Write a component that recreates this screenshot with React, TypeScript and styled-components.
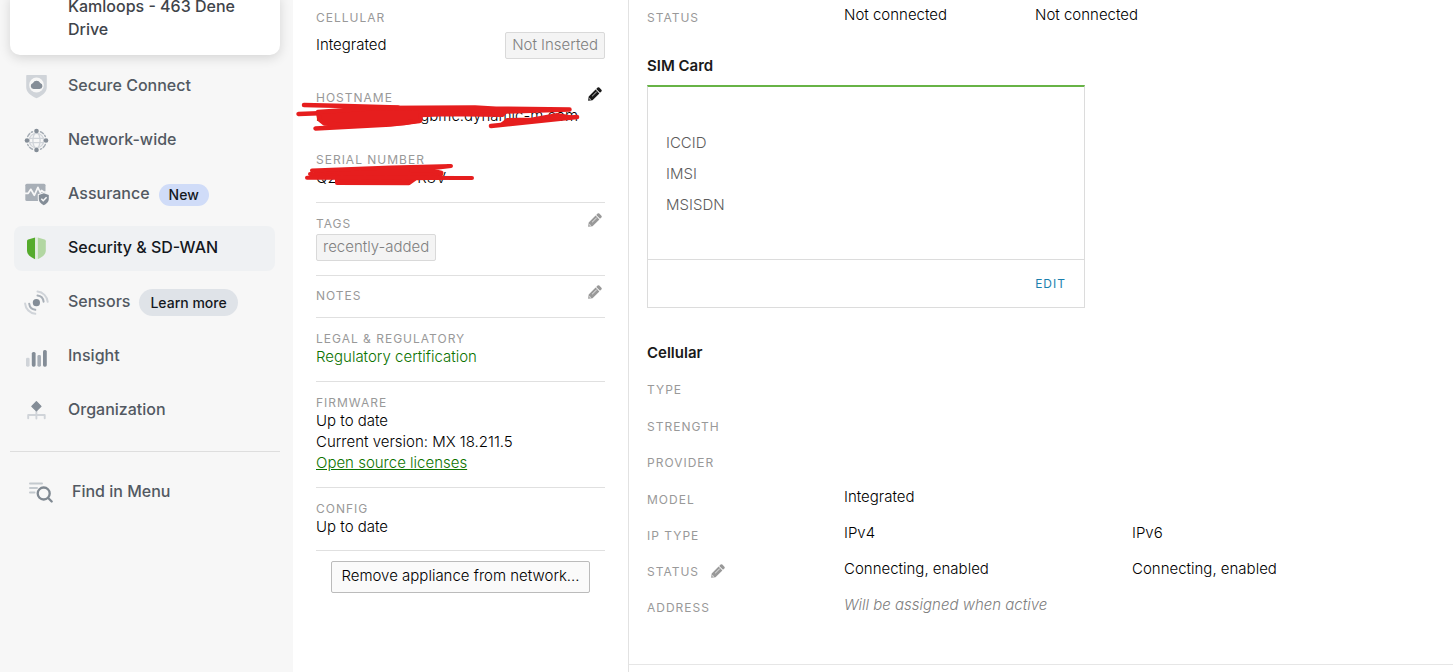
import React from "react";
import styled, { createGlobalStyle } from "styled-components";

const GlobalStyle = createGlobalStyle`
  *, *::before, *::after { box-sizing: border-box; }
  html { background: #fff; }
  body {
    margin: 0;
    font-family: Inter, "Liberation Sans", sans-serif;
    font-size: 15px;
    font-weight: 300;
    line-height: 21px;
    color: #000;
    overflow: hidden;
  }
`;

const Page = styled.div`
  display: grid;
  grid-template-columns: 293px 336px minmax(0, 1fr);
  min-height: 100vh;
`;

/* ---------- Sidebar ---------- */

const Sidebar = styled.nav`
  background: #f7f7f7;
  padding: 0 13px 0 10px;
`;

const NetworkCard = styled.div`
  background: #fff;
  border-radius: 0 0 10px 10px;
  box-shadow: 0 3px 12px rgba(0, 0, 0, 0.14);
  padding: 0 40px 14px 58px;
  font-size: 16px;
  font-weight: 500;
  line-height: 23px;
  color: #3f444a;

  span {
    display: block;
    margin-top: -5px;
  }
`;

const NavList = styled.ul`
  list-style: none;
  margin: 9px 0 0;
  padding: 0 5px 0 4px;
  display: flex;
  flex-direction: column;
  gap: 9px;
`;

const NavItem = styled.li<{ $active?: boolean }>`
  display: flex;
  align-items: center;
  gap: 9px;
  height: 45px;
  padding-left: 10px;
  border-radius: 8px;
  background: ${(p) => (p.$active ? "#eff1f3" : "transparent")};
`;

const NavLink = styled.a<{ $active?: boolean }>`
  display: flex;
  align-items: flex-start;
  gap: 18px;
  text-decoration: none;
  font-size: 16px;
  font-weight: 500;
  line-height: 22px;
  color: ${(p) => (p.$active ? "#14181d" : "#525962")};

  svg {
    flex: none;
    width: 26px;
    height: 26px;
  }
`;

const Pill = styled.span<{ $tone: "blue" | "grey" }>`
  padding: ${(p) => (p.$tone === "blue" ? "0 10px 1px" : "3px 11px")};
  border-radius: 14px;
  background: ${(p) => (p.$tone === "blue" ? "#d0dcf8" : "#dfe3e8")};
  color: #14181d;
  font-size: 14px;
  font-weight: 500;
  line-height: 21px;
`;

const SidebarRule = styled.hr`
  border: 0;
  border-top: 1px solid #dedede;
  margin: 18px 0 0;
`;

const FindButton = styled.button`
  display: flex;
  align-items: flex-start;
  gap: 18px;
  margin: 27px 0 0 18px;
  padding: 0;
  border: 0;
  background: none;
  font: 500 16px/24px Inter, "Liberation Sans", sans-serif;
  color: #525962;

  svg {
    width: 26px;
    height: 26px;
  }
`;

/* ---------- Details column ---------- */

const Details = styled.aside`
  border-right: 1px solid #e2e2e2;
  padding: 10px 23px 0;
`;

const Section = styled.section<{ $bottom?: number; $top?: number; $rule?: boolean }>`
  position: relative;
  padding: ${(p) => p.$top ?? 13}px 0 ${(p) => p.$bottom ?? 14}px;
  border-bottom: ${(p) => (p.$rule === false ? "0" : "1px solid #e0e0e0")};
`;

const Label = styled.h3`
  margin: 0 0 -1px;
  font-size: 12px;
  font-weight: 400;
  line-height: 16px;
  letter-spacing: 1px;
  text-transform: uppercase;
  color: #999;
`;

const LabelRow = styled.div`
  display: flex;
  justify-content: space-between;
  height: 15px;
  padding-right: 3px;
`;

const IconButton = styled.button<{ $dark?: boolean }>`
  display: block;
  height: 14px;
  margin-top: -3px;
  padding: 0;
  border: 0;
  background: none;
  color: ${(p) => (p.$dark ? "#1a1a1a" : "#999")};

  svg {
    display: block;
    width: 14px;
    height: 14px;
  }
`;

const Line = styled.div`
  line-height: 21px;
`;

const TextLink = styled.a<{ $underline?: boolean }>`
  color: #0c7300;
  text-decoration: ${(p) => (p.$underline ? "underline" : "none")};
`;

const CardSlot = styled.div`
  display: flex;
  justify-content: space-between;
  align-items: flex-start;
  margin-top: 7px;
`;

const CardType = styled.span`
  padding-top: 2px;
`;

const Tag = styled.span`
  display: inline-block;
  padding: 1px 6px 3px;
  border: 1px solid #d9d9d9;
  border-radius: 2px;
  background: #f4f4f4;
  color: #808080;
`;

const TagSlot = styled.div`
  display: flex;
  margin-top: 3px;
`;

const Masked = styled.div<{ $width: number }>`
  display: flex;
  justify-content: space-between;
  width: ${(p) => p.$width}px;
`;

const Marker = styled.svg`
  position: absolute;
  left: -23px;
  top: 0;
  width: 300px;
  height: 112px;
  pointer-events: none;
`;

const RemoveButton = styled.button`
  display: block;
  margin: 10px auto 0;
  padding: 3px 9px 6px;
  border: 1px solid #bbb;
  border-radius: 2px;
  background: #fafafa;
  font: 300 15px/21px Inter, "Liberation Sans", sans-serif;
  color: #000;
`;

/* ---------- Uplink column ---------- */

const Uplink = styled.main`
  min-width: 0;
`;

const UplinkBody = styled.div`
  padding: 4px 18px 34px;
  border-bottom: 1px solid #e6e6e6;
`;

const Heading = styled.h2`
  margin: 0;
  font-size: 15px;
  font-weight: 600;
  line-height: 21px;
  color: #1a1a1a;
`;

const DataTable = styled.table<{ $gap?: number }>`
  width: 100%;
  margin-top: ${(p) => p.$gap ?? 0}px;
  table-layout: fixed;
  border-collapse: collapse;

  th, td {
    padding: 0;
    text-align: left;
    vertical-align: top;
    font-weight: 300;
  }
`;

const Row = styled.tr<{ $height?: number }>`
  height: ${(p) => p.$height ?? 36}px;
`;

const RowHead = styled.div`
  display: flex;
  align-items: center;
  gap: 12px;
  padding-top: 6px;
  font-size: 12px;
  font-weight: 400;
  line-height: 16px;
  letter-spacing: 1px;
  text-transform: uppercase;
  color: #999;
`;

const Pending = styled.em`
  color: #808080;
`;

const SimCard = styled.section`
  max-width: 438px;
  margin: 9px 0 34px;
  border: 1px solid #dcdcdc;
  border-top: 2px solid #67b346;
`;

const SimFields = styled.ul`
  list-style: none;
  margin: 0;
  padding: 40px 18px 39px;
  color: #5c5c5c;

  li { line-height: 31px; }
`;

const SimFooter = styled.footer`
  display: flex;
  justify-content: flex-end;
  padding: 16px 18px 15px;
  border-top: 1px solid #dcdcdc;
`;

const EditButton = styled.button`
  padding: 0;
  border: 0;
  background: none;
  font: 400 12px/16px Inter, "Liberation Sans", sans-serif;
  letter-spacing: 1px;
  color: #1b7fae;
`;

/* ---------- Icons ---------- */

const DARK = "#848d97";
const MID = "#a8afb7";
const LIGHT = "#d0d4d9";
const BG = "#f7f7f7";

const ShieldCloudIcon = () => (
  <svg viewBox="0 0 26 26" aria-hidden="true">
    <path d="M3 1h19q.8 0 .8.8V13c0 5-4 8.600-10.300 11.200C6.200 21.600 2.200 18 2.200 13V1.800Q2.200 1 3 1z" fill={LIGHT} />
    <circle cx="12.500" cy="11" r="7.400" fill={BG} />
    <path d="M9.600 15a3 3 0 0 1-.6-5.900 3.900 3.900 0 0 1 7.200 0 3 3 0 0 1-.6 5.900z" fill={DARK} />
  </svg>
);

const GlobeIcon = () => (
  <svg viewBox="0 0 26 26" fill="none" aria-hidden="true">
    <circle cx="12.500" cy="12.500" r="7.200" stroke={LIGHT} strokeWidth="1.300" />
    <ellipse cx="12.500" cy="12.500" rx="3.600" ry="7.800" stroke={LIGHT} strokeWidth="1.300" />
    <path d="M5 10.300h15M5 14.700h15" stroke={LIGHT} strokeWidth="1.200" />
    <path d="M3.700 8.500a10 10 0 0 1 4.800-4.800M16.500 3.700a10 10 0 0 1 4.800 4.800M21.300 16.500a10 10 0 0 1-4.800 4.800M8.500 21.300a10 10 0 0 1-4.800-4.800" stroke={MID} strokeWidth="1.500" strokeLinecap="round" strokeDasharray="3.500 2" />
    <g fill={DARK}>
      <circle cx="12.500" cy="3" r="2.300" />
      <circle cx="12.500" cy="22" r="2.300" />
      <circle cx="3" cy="12.500" r="2.300" />
      <circle cx="22" cy="12.500" r="2.300" />
    </g>
  </svg>
);

const AssuranceIcon = () => (
  <svg viewBox="0 0 26 26" fill="none" aria-hidden="true">
    <rect x="1.300" y="1.700" width="20.200" height="17.200" rx="1.500" fill={MID} />
    <path d="M1 11.300h3.200l2.600-4 3.500 6 3.600-8 2.400 5.200 1.300-2 2 1.500h2.400" stroke={BG} strokeWidth="1.700" strokeLinejoin="round" />
    <path d="M19.800 10.300l6 2v4.800c0 3.300-2.500 5.600-6 7.200-3.500-1.600-6-3.900-6-7.200v-4.800z" fill={BG} />
    <path d="M19.800 11.300l5 1.700v4c0 2.800-2 4.800-5 6.200-3-1.400-5-3.400-5-6.200v-4z" fill={DARK} />
    <path d="M17.300 16.800l1.900 1.900 3.400-3.500" stroke={BG} strokeWidth="1.600" />
  </svg>
);

const SecurityIcon = () => (
  <svg viewBox="0 0 26 26" aria-hidden="true">
    <path d="M11.100 1.600v21.600C6 20.900 3 18.400 3 14.500V5.200Q3 4 4.200 3.600z" fill="#55ab2c" />
    <path d="M13.700 1.600v21.600c5.100-2.300 8.100-4.800 8.100-8.700V5.200q0-1.200-1.200-1.600z" fill="#b2d7a2" />
    <path d="M12.400 1.200v22.300" stroke="#e1ecdd" strokeWidth="1" />
  </svg>
);

const SensorsIcon = () => (
  <svg viewBox="0 0 26 26" fill="none" strokeWidth="2" strokeLinecap="round" aria-hidden="true">
    <circle cx="12.400" cy="12.700" r="3.600" fill={DARK} />
    <path d="M13.500 5.600a7 7 0 0 1 6.100 6.100M11.300 19.800a7 7 0 0 1-6.100-6.100" stroke={MID} />
    <path d="M13.500 1.600a11.200 11.200 0 0 1 10.200 10.200M11.300 23.800A11.200 11.200 0 0 1 1.100 13.600" stroke={LIGHT} />
  </svg>
);

const InsightIcon = () => (
  <svg viewBox="0 0 26 26" aria-hidden="true">
    <rect x="2" y="13.700" width="3.600" height="9" rx="1.400" fill={LIGHT} />
    <rect x="7.800" y="8" width="3.800" height="14.700" rx="1.600" fill={DARK} />
    <rect x="13.400" y="11" width="3.600" height="11.700" rx="1.400" fill={MID} />
    <rect x="19" y="6" width="3.800" height="16.700" rx="1.600" fill={DARK} />
  </svg>
);

const OrganizationIcon = () => (
  <svg viewBox="0 0 26 26" fill="none" aria-hidden="true">
    <path d="M12.400 13v7.500M4.200 20.200v-3.200h16.500v3.200" stroke={LIGHT} strokeWidth="1.900" strokeLinecap="round" strokeLinejoin="round" />
    <path d="M12.400 3.700l4.600 4.600-4.600 4.600L7.800 8.300z" fill={DARK} stroke={DARK} strokeWidth="1.200" strokeLinejoin="round" />
  </svg>
);

const FindIcon = () => (
  <svg viewBox="0 0 26 26" fill="none" strokeLinecap="round" aria-hidden="true">
    <path d="M2 4.400h12M2 9h7M2 13.500h4.500" stroke="#c3c9ce" strokeWidth="2" />
    <circle cx="15.700" cy="14.500" r="6" stroke="#7f8891" strokeWidth="2.300" />
    <path d="M20.200 19l3.500 3.500" stroke="#7f8891" strokeWidth="2.300" />
  </svg>
);

const PencilIcon = () => (
  <svg viewBox="0 0 14 14" aria-hidden="true">
    <path
      fill="currentColor"
      fillRule="evenodd"
      d="M.1 13.700l.6-4.200L7.600 2.600l3.800 3.800-6.900 6.900zM1.500 10.900l-.2 1.100.7.700 1.100-.2zM4 9.100l.3.300 4.500-4.500-.3-.3z"
    />
    <path fill="currentColor" d="M8.200 2L9.600.6q.9-.8 1.700 0l2.100 2.100q.8.900 0 1.700L12 5.800z" />
  </svg>
);

const NAV: { label: string; icon: React.FC; pill?: string; tone?: "blue" | "grey"; active?: boolean }[] = [
  { label: "Secure Connect", icon: ShieldCloudIcon },
  { label: "Network-wide", icon: GlobeIcon },
  { label: "Assurance", icon: AssuranceIcon, pill: "New", tone: "blue" },
  { label: "Security & SD-WAN", icon: SecurityIcon, active: true },
  { label: "Sensors", icon: SensorsIcon, pill: "Learn more", tone: "grey" },
  { label: "Insight", icon: InsightIcon },
  { label: "Organization", icon: OrganizationIcon },
];

const EditPencil = ({ label, dark }: { label: string; dark?: boolean }) => (
  <IconButton type="button" aria-label={label} $dark={dark}>
    <PencilIcon />
  </IconButton>
);

/* Hand-drawn marker strokes that hide the host name and the serial number. */
const Redaction = () => (
  <Marker viewBox="293 90 300 112" aria-hidden="true">
    <g fill="#e61e1e" stroke="#e61e1e" strokeLinecap="round" strokeLinejoin="round">
      <g strokeWidth="4.500">
        <path d="M304 105l42 1 52 1.500" />
        <path d="M298.500 114l20-.8" />
        <path d="M315.500 128.500l75-4 29-3.500" fill="none" />
        <path d="M318 112l58-4 99-.5 21 1.200 73.500.8-64 2-3 3.300-55-.7-27 .9 0 5-16 3-50 2.500-30-2-5-4z" />
        <path d="M491 126l86-9" fill="none" />
        <path d="M501 124l6-5 25-.5 25-4.500 17 2.700-35 3.800z" strokeWidth="2" />
      </g>
      <g strokeWidth="4">
        <path d="M451 166l-60 1.500-79 3 3 3.500h-5l27 2v7l72 .2 7-5 24-.5 1.500-5-10-2.200-20 .3z" />
        <path d="M307 177.700l165 .3" />
      </g>
    </g>
  </Marker>
);

export default function App() {
  return (
    <>
      <GlobalStyle />
      <Page>
        <Sidebar aria-label="Main">
          <NetworkCard>
            <span>Kamloops - 463 Dene Drive</span>
          </NetworkCard>
          <NavList>
            {NAV.map(({ label, icon: Icon, pill, tone, active }) => (
              <NavItem key={label} $active={active}>
                <NavLink href="#" $active={active} aria-current={active ? "page" : undefined}>
                  <Icon />
                  {label}
                </NavLink>
                {pill && <Pill $tone={tone ?? "grey"}>{pill}</Pill>}
              </NavItem>
            ))}
          </NavList>
          <SidebarRule />
          <FindButton type="button">
            <FindIcon />
            Find in Menu
          </FindButton>
        </Sidebar>

        <Details>
          <Section $top={0} $bottom={31} $rule={false}>
            <Label>Cellular</Label>
            <CardSlot>
              <CardType>Integrated</CardType>
              <Tag>Not Inserted</Tag>
            </CardSlot>
          </Section>

          <Section $top={0}>
            <LabelRow>
              <Label>Hostname</Label>
              <EditPencil label="Edit hostname" dark />
            </LabelRow>
            <Masked $width={262}>
              <span>r</span>
              <span>gbmc.dynamic-m.com</span>
            </Masked>
            <Section as="div" $top={26} $bottom={0} $rule={false}>
              <Label>Serial number</Label>
              <Masked $width={130}>
                <span>Q2</span>
                <span>R8V</span>
              </Masked>
            </Section>
            <Redaction />
          </Section>

          <Section>
            <LabelRow>
              <Label>Tags</Label>
              <EditPencil label="Edit tags" />
            </LabelRow>
            <TagSlot>
              <Tag>recently-added</Tag>
            </TagSlot>
          </Section>

          <Section $top={12}>
            <LabelRow>
              <Label>Notes</Label>
              <EditPencil label="Edit notes" />
            </LabelRow>
          </Section>

          <Section>
            <Label>Legal &amp; Regulatory</Label>
            <Line>
              <TextLink href="#">Regulatory certification</TextLink>
            </Line>
          </Section>

          <Section>
            <Label>Firmware</Label>
            <Line>Up to date</Line>
            <Line>Current version: MX 18.211.5</Line>
            <Line>
              <TextLink href="#" $underline>Open source licenses</TextLink>
            </Line>
          </Section>

          <Section $bottom={13}>
            <Label>Config</Label>
            <Line>Up to date</Line>
          </Section>

          <RemoveButton type="button">Remove appliance from network...</RemoveButton>
        </Details>

        <Uplink>
          <UplinkBody>
            <DataTable>
              <colgroup>
                <col width="197" />
                <col width="191" />
                <col />
              </colgroup>
              <tbody>
                <Row $height={51}>
                  <th scope="row"><RowHead>Status</RowHead></th>
                  <td>Not connected</td>
                  <td>Not connected</td>
                </Row>
              </tbody>
            </DataTable>

            <Heading>SIM Card</Heading>
            <SimCard>
              <SimFields>
                <li>ICCID</li>
                <li>IMSI</li>
                <li>MSISDN</li>
              </SimFields>
              <SimFooter>
                <EditButton type="button">EDIT</EditButton>
              </SimFooter>
            </SimCard>

            <Heading>Cellular</Heading>
            <DataTable $gap={13}>
              <colgroup>
                <col width="197" />
                <col width="288" />
                <col />
              </colgroup>
              <tbody>
                <Row $height={37}><th scope="row"><RowHead>Type</RowHead></th><td /><td /></Row>
                <Row><th scope="row"><RowHead>Strength</RowHead></th><td /><td /></Row>
                <Row $height={37}><th scope="row"><RowHead>Provider</RowHead></th><td /><td /></Row>
                <Row><th scope="row"><RowHead>Model</RowHead></th><td>Integrated</td><td /></Row>
                <Row><th scope="row"><RowHead>IP type</RowHead></th><td>IPv4</td><td>IPv6</td></Row>
                <Row>
                  <th scope="row">
                    <RowHead>
                      Status
                      <EditPencil label="Edit cellular status" />
                    </RowHead>
                  </th>
                  <td>Connecting, enabled</td>
                  <td>Connecting, enabled</td>
                </Row>
                <Row><th scope="row"><RowHead>Address</RowHead></th><td><Pending>Will be assigned when active</Pending></td><td /></Row>
              </tbody>
            </DataTable>
          </UplinkBody>
        </Uplink>
      </Page>
    </>
  );
}
